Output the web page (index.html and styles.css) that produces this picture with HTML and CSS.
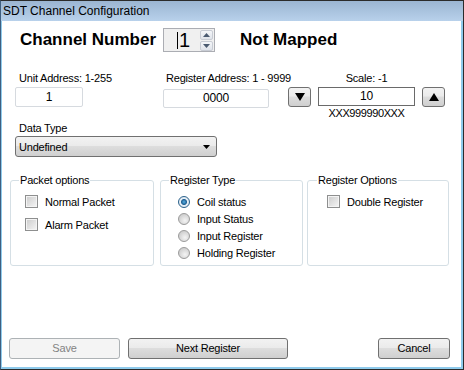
FILE: index.html
```html
<!DOCTYPE html>
<html>
<head>
<meta charset="utf-8">
<link rel="stylesheet" href="styles.css">
</head>
<body>
<div class="window">
  <div class="titlebar">SDT Channel Configuration</div>
  <div class="client">
    <div class="header">
      <div class="big label">Channel Number</div>
      <div class="spin">
        <span class="spin-val"><span class="caret"></span>1</span>
        <div class="spin-btns">
          <span class="sb"><svg width="7" height="4" viewBox="0 0 7 4"><path d="M0 4 L3.5 0 L7 4 Z" fill="#4a5a70"/></svg></span>
          <span class="sb"><svg width="7" height="4" viewBox="0 0 7 4"><path d="M0 0 L3.5 4 L7 0 Z" fill="#4a5a70"/></svg></span>
        </div>
      </div>
      <div class="big status">Not Mapped</div>
    </div>

    <div class="fields">
      <div class="col col-unit">
        <div class="lbl pad">Unit Address: 1-255</div>
        <div class="tb center">1</div>
      </div>
      <div class="col col-reg">
        <div class="lbl pad3">Register Address: 1 - 9999</div>
        <div class="tb center reg">0000</div>
      </div>
      <div class="col col-btn down-col">
        <div class="sqbtn"><svg width="10" height="8" viewBox="0 0 10 8"><path d="M0 0 L10 0 L5 8 Z" fill="#000"/></svg></div>
      </div>
      <div class="col col-scale">
        <div class="lbl center">Scale: -1</div>
        <div class="tb center scale">10</div>
        <div class="lbl center mask">XXX999990XXX</div>
      </div>
      <div class="col col-btn up-col">
        <div class="sqbtn"><svg width="10" height="8" viewBox="0 0 10 8"><path d="M0 8 L10 8 L5 0 Z" fill="#000"/></svg></div>
      </div>
    </div>

    <div class="datatype">
      <div class="lbl pad">Data Type</div>
      <div class="select"><span>Undefined</span><svg width="7" height="4" viewBox="0 0 7 4"><path d="M0 0 L7 0 L3.5 4 Z" fill="#000"/></svg></div>
    </div>

    <div class="groups">
      <fieldset class="grp g1">
        <legend>Packet options</legend>
        <div class="checks">
          <div class="opt"><span class="cb"></span>Normal Packet</div>
          <div class="opt"><span class="cb"></span>Alarm Packet</div>
        </div>
      </fieldset>
      <fieldset class="grp g2">
        <legend>Register Type</legend>
        <div class="radios">
          <div class="opt"><span class="rb on"></span>Coil status</div>
          <div class="opt"><span class="rb"></span>Input Status</div>
          <div class="opt"><span class="rb"></span>Input Register</div>
          <div class="opt"><span class="rb"></span>Holding Register</div>
        </div>
      </fieldset>
      <fieldset class="grp g3">
        <legend>Register Options</legend>
        <div class="checks dbl">
          <div class="opt"><span class="cb"></span>Double Register</div>
        </div>
      </fieldset>
    </div>

    <div class="buttons">
      <div class="btn disabled save">Save</div>
      <div class="btn next">Next Register</div>
      <div class="btn cancel">Cancel</div>
    </div>
  </div>
</div>
</body>
</html>
```

FILE: styles.css
```css
html, body {
  margin: 0;
  padding: 0;
  background: #fff;
}

.window {
  width: 464px;
  height: 370px;
  box-sizing: border-box;
  border: 1px solid #2b2b2b;
  border-left-color: #3f5f80;
  background: #8fcbec;
  display: flex;
  flex-direction: column;
  font-family: "Liberation Sans", Arial, sans-serif;
  color: #000;
}

.titlebar {
  height: 20px;
  line-height: 20px;
  background: linear-gradient(#9bb5d2, #b8d1eb);
  font-size: 12px;
  padding-left: 2px;
}

.client {
  flex: 1;
  background: #fff;
  margin: 0 2px 2px 1px;
  display: flex;
  flex-direction: column;
  font-size: 11px;
  letter-spacing: -0.2px;
}

/* header */
.header {
  display: flex;
  align-items: center;
  margin-top: 7px;
  height: 24px;
  padding-left: 18px;
}

.big {
  font-size: 17px;
  font-weight: bold;
  letter-spacing: 0;
  line-height: 24px;
}

.big.label {
  width: 143px;
}

.spin {
  width: 52px;
  height: 24px;
  box-sizing: border-box;
  border: 1px solid #abadb3;
  background: #f0f0f0;
  display: flex;
  align-items: center;
}

.spin-val {
  flex: 1;
  font-size: 20px;
  line-height: 22px;
  padding-left: 13px;
  display: flex;
  align-items: center;
}

.caret {
  width: 1px;
  height: 17px;
  background: #000;
  margin-right: 1px;
}

.spin-btns {
  display: flex;
  flex-direction: column;
  gap: 1px;
  margin-right: 1px;
}

.sb {
  width: 13px;
  height: 10px;
  box-sizing: border-box;
  border: 1px solid #c8ccd4;
  border-radius: 2px;
  background: linear-gradient(#f4f6f9, #dfe3ea);
  display: flex;
  align-items: center;
  justify-content: center;
}

.status {
  margin-left: 25px;
}

/* field row */
.fields {
  display: flex;
  margin-top: 19px;
  height: 48px;
  padding-left: 13px;
}

.col {
  display: flex;
  flex-direction: column;
}

.lbl {
  line-height: 14px;
  height: 14px;
  white-space: nowrap;
}

.pad { padding-left: 4px; }
.pad3 { padding-left: 3px; }
.center { text-align: center; }
.right { text-align: right; }

.col-unit { width: 68px; }
.col-reg { width: 106px; margin-left: 80px; }
.down-col { margin-left: 19px; }
.col-scale { width: 97px; margin-left: 7px; }
.up-col { margin-left: 7px; }

.tb {
  margin-top: 2px;
  height: 20px;
  box-sizing: border-box;
  border: 1px solid #d6dadf;
  border-radius: 2px;
  line-height: 18px;
  font-size: 12px;
}

.tb.reg {
  margin-top: 4px;
  height: 19px;
  line-height: 17px;
}

.tb.scale {
  height: 19px;
  line-height: 17px;
  border-color: #6a6a6a;
  border-radius: 0;
}

.mask {
  font-size: 11px;
  letter-spacing: -0.4px;
  line-height: 14px;
  margin-top: 0;
}

.col-btn {
  width: 23px;
  padding-top: 16px;
}

.sqbtn {
  width: 23px;
  height: 20px;
  box-sizing: border-box;
  border: 1px solid #707070;
  border-radius: 3px;
  background: linear-gradient(#f2f2f2 0%, #ebebeb 45%, #dddddd 50%, #cfcfcf 100%);
  display: flex;
  align-items: center;
  justify-content: center;
}

/* data type */
.datatype {
  margin-top: 2px;
  padding-left: 13px;
}

.datatype .lbl {
  height: 14px;
  line-height: 14px;
  margin-bottom: 1px;
}

.select {
  width: 202px;
  height: 21px;
  box-sizing: border-box;
  border: 1px solid #707070;
  border-radius: 3px;
  background: linear-gradient(#f2f2f2 0%, #ebebeb 45%, #dddddd 50%, #cfcfcf 100%);
  display: flex;
  align-items: center;
  justify-content: space-between;
  padding: 0 6px 0 3px;
  font-size: 11px;
}

/* groups */
.groups {
  display: flex;
  margin-top: 17px;
  padding-left: 8px;
}

.grp {
  margin: 0;
  padding: 0;
  height: 92px;
  box-sizing: border-box;
  border: 1px solid #d5dfe5;
  border-radius: 3px;
  min-width: 0;
}

.grp legend {
  padding: 0 1px;
  margin-left: 8px;
  line-height: 13px;
  font-size: 11px;
}

.g1 { width: 144px; }
.g2 { width: 143px; margin-left: 6px; }
.g3 { width: 142px; margin-left: 4px; }
.g3 legend { margin-left: 9px; }

.opt {
  display: flex;
  align-items: center;
  white-space: nowrap;
}

.checks {
  display: flex;
  flex-direction: column;
  gap: 10px;
  padding: 8px 0 0 14px;
}

.checks .opt { height: 13px; }
.checks .cb { margin-right: 7px; }

.dbl { padding-left: 19px; }

.radios {
  display: flex;
  flex-direction: column;
  gap: 4px;
  padding: 8px 0 0 17px;
}

.radios .opt { height: 13px; }
.radios .rb { margin-right: 7px; }

.cb {
  width: 13px;
  height: 13px;
  box-sizing: border-box;
  border: 1px solid #8e8f8f;
  background: linear-gradient(135deg, #cbcbcb, #f6f6f6);
  box-shadow: inset 0 0 0 1px #f4f4f4;
  flex: none;
}

.rb {
  width: 12px;
  height: 12px;
  box-sizing: border-box;
  border-radius: 50%;
  border: 1px solid #9a9a9a;
  background: radial-gradient(circle at 60% 65%, #f4f4f4 0, #d0d0d0 70%);
  flex: none;
  position: relative;
}

.rb.on {
  border-color: #2c628b;
  background: radial-gradient(circle at 50% 50%, #5ab2e6 0, #1e5f92 2.5px, #e6eef6 3.5px, #d8e4ee 100%);
}

/* buttons */
.buttons {
  margin-top: auto;
  margin-bottom: 8px;
  display: flex;
  padding-left: 7px;
}

.btn {
  height: 21px;
  box-sizing: border-box;
  border: 1px solid #707070;
  border-radius: 3px;
  background: linear-gradient(#f2f2f2 0%, #ebebeb 45%, #dddddd 50%, #cfcfcf 100%);
  text-align: center;
  line-height: 19px;
  font-size: 11px;
}

.btn.disabled {
  border-color: #adb2b5;
  background: #f4f4f4;
  color: #838383;
}

.save { width: 111px; }
.next { width: 160px; margin-left: 8px; }
.cancel { width: 72px; margin-left: 90px; }
```
